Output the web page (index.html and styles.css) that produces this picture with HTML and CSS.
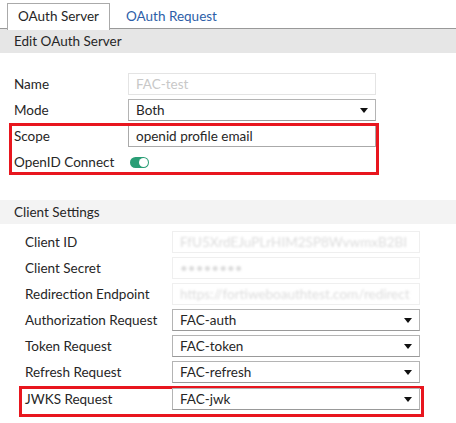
FILE: index.html
```html
<!DOCTYPE html>
<html lang="en">
<head>
  <meta charset="UTF-8">
  <title>OAuth Server</title>
  <link rel="stylesheet" href="styles.css">
</head>
<body>

  <div class="tabs">
    <div class="tab active">OAuth Server</div>
    <div class="tab">OAuth Request</div>
  </div>

  <div class="section-head">Edit OAuth Server</div>

  <div class="fields server">
    <div class="row">
      <label>Name</label>
      <div class="field disabled">FAC-test</div>
    </div>
    <div class="row">
      <label>Mode</label>
      <div class="field select">Both</div>
    </div>
    <div class="highlight scope-box">
      <div class="row">
        <label>Scope</label>
        <div class="field text">openid profile email</div>
      </div>
      <div class="row">
        <label>OpenID Connect</label>
        <div class="toggle"><span class="knob"></span></div>
      </div>
    </div>
  </div>

  <div class="section-head light">Client Settings</div>

  <div class="fields client">
    <div class="row">
      <label>Client ID</label>
      <div class="field blurred"><span>FfU5XrdEJuPLrHIM2SP8WvwmxB2BI</span></div>
    </div>
    <div class="row">
      <label>Client Secret</label>
      <div class="field blurred"><span>&bull;&bull;&bull;&bull;&bull;&bull;&bull;&bull;</span></div>
    </div>
    <div class="row">
      <label>Redirection Endpoint</label>
      <div class="field blurred"><span>https://fortiweboauthtest.com/redirect</span></div>
    </div>
    <div class="row">
      <label>Authorization Request</label>
      <div class="field select">FAC-auth</div>
    </div>
    <div class="row">
      <label>Token Request</label>
      <div class="field select">FAC-token</div>
    </div>
    <div class="row">
      <label>Refresh Request</label>
      <div class="field select">FAC-refresh</div>
    </div>
    <div class="highlight jwks-box">
      <div class="row">
        <label>JWKS Request</label>
        <div class="field select">FAC-jwk</div>
      </div>
    </div>
  </div>

</body>
</html>
```

FILE: styles.css
```css
body {
  font-family: Lato, "Noto Sans", sans-serif;
  font-size: 13.5px;
  color: #262626;
  background-color: white;
  margin: 0;
  padding: 0;
}

.tabs {
  display: flex;
  height: 28px;
  padding-left: 7px;
  border-bottom: 1px solid #999;
}

.tab {
  margin-top: 3px;
  height: 25px;
  line-height: 25px;
  padding: 0 10px;
  color: #2c5ea8;
  border: 1px solid transparent;
  border-bottom: none;
  margin-right: 5px;
}

.tab.active {
  color: #262626;
  background-color: white;
  border-color: #aaa;
  height: 26px;
  margin-bottom: -1px;
}

.section-head {
  height: 24px;
  line-height: 24px;
  padding-left: 14px;
  background-color: #e6e6e6;
}

.section-head.light {
  background-color: #f3f3f3;
}

.server {
  padding-top: 18px;
  padding-bottom: 25px;
}

.client {
  padding-top: 5px;
}

.row {
  display: flex;
  align-items: center;
  height: 26px;
}

.row label {
  flex: none;
}

.server .row {
  padding-left: 14px;
}

.server .row label {
  width: 114px;
}

.client .row {
  padding-left: 25px;
}

.client .row label {
  width: 147px;
}

.field {
  box-sizing: border-box;
  width: 248px;
  height: 22px;
  line-height: 20px;
  padding-left: 7px;
  border: 1px solid #aaa;
  background-color: white;
  white-space: nowrap;
  overflow: hidden;
}

.field.disabled {
  border-color: #e4e4e4;
  color: #c8c8c8;
}

.field.select {
  position: relative;
  border-color: #b4b4b4;
  border-bottom-color: #999;
}

.field.select::after {
  content: "";
  position: absolute;
  right: 7px;
  top: 8px;
  border-left: 4px solid transparent;
  border-right: 4px solid transparent;
  border-top: 5px solid #111;
}

.field.blurred {
  border-color: #efefef;
  color: #dcdcdc;
}

.field.blurred span {
  display: inline-block;
  filter: blur(1px);
}

.toggle {
  position: relative;
  width: 19px;
  height: 11px;
  margin-left: 2px;
  border-radius: 6px;
  background-color: #2a9e76;
}

.knob {
  position: absolute;
  right: 1px;
  top: 1px;
  width: 9px;
  height: 9px;
  border-radius: 50%;
  background-color: white;
}

.highlight {
  outline: 3px solid #e8161e;
  outline-offset: -3px;
}

.scope-box {
  margin-left: 9px;
  margin-right: 77px;
}

.scope-box .row {
  padding-left: 5px;
}

.jwks-box {
  margin-top: 1px;
  height: 31px;
  margin-left: 19px;
  margin-right: 32px;
}

.jwks-box .row {
  padding-left: 6px;
}
```
